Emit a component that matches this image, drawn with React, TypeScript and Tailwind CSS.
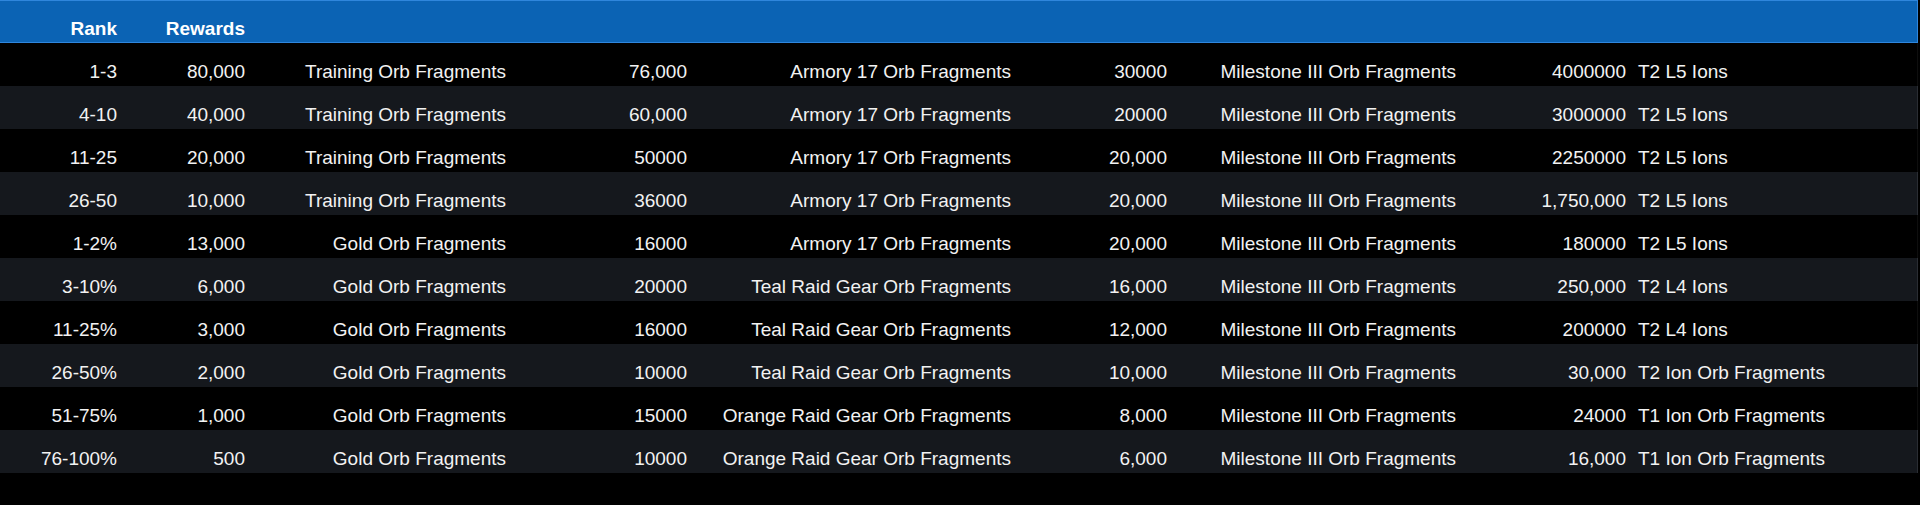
import React from "react";

const rows: string[][] = [
  ["1-3", "80,000", "Training Orb Fragments", "76,000", "Armory 17 Orb Fragments", "30000", "Milestone III Orb Fragments", "4000000", "T2 L5 Ions"],
  ["4-10", "40,000", "Training Orb Fragments", "60,000", "Armory 17 Orb Fragments", "20000", "Milestone III Orb Fragments", "3000000", "T2 L5 Ions"],
  ["11-25", "20,000", "Training Orb Fragments", "50000", "Armory 17 Orb Fragments", "20,000", "Milestone III Orb Fragments", "2250000", "T2 L5 Ions"],
  ["26-50", "10,000", "Training Orb Fragments", "36000", "Armory 17 Orb Fragments", "20,000", "Milestone III Orb Fragments", "1,750,000", "T2 L5 Ions"],
  ["1-2%", "13,000", "Gold Orb Fragments", "16000", "Armory 17 Orb Fragments", "20,000", "Milestone III Orb Fragments", "180000", "T2 L5 Ions"],
  ["3-10%", "6,000", "Gold Orb Fragments", "20000", "Teal Raid Gear Orb Fragments", "16,000", "Milestone III Orb Fragments", "250,000", "T2 L4 Ions"],
  ["11-25%", "3,000", "Gold Orb Fragments", "16000", "Teal Raid Gear Orb Fragments", "12,000", "Milestone III Orb Fragments", "200000", "T2 L4 Ions"],
  ["26-50%", "2,000", "Gold Orb Fragments", "10000", "Teal Raid Gear Orb Fragments", "10,000", "Milestone III Orb Fragments", "30,000", "T2 Ion Orb Fragments"],
  ["51-75%", "1,000", "Gold Orb Fragments", "15000", "Orange Raid Gear Orb Fragments", "8,000", "Milestone III Orb Fragments", "24000", "T1 Ion Orb Fragments"],
  ["76-100%", "500", "Gold Orb Fragments", "10000", "Orange Raid Gear Orb Fragments", "6,000", "Milestone III Orb Fragments", "16,000", "T1 Ion Orb Fragments"],
];

const gridCols =
  "grid grid-cols-[117px_128px_261px_181px_324px_156px_289px_170px_1fr]";

export default function App() {
  return (
    <div
      className="w-[1920px] h-[505px] bg-black text-[#f2f2f2] overflow-hidden"
      style={{ fontFamily: '"Liberation Sans", Arial, sans-serif' }}
    >
      <div className="w-[1918px]">
        <div
          className={`${gridCols} h-[43px] bg-[#0b63b4] border-t border-b border-r border-[#2f86dc] text-[19px] font-bold items-end pb-[2px] text-white`}
        >
          <div className="text-right leading-[22px]">Rank</div>
          <div className="text-right leading-[22px]">Rewards</div>
          <div />
          <div />
          <div />
          <div />
          <div />
          <div />
          <div />
        </div>
        {rows.map((r, i) => (
          <div
            key={i}
            className={`${gridCols} h-[43px] items-end pb-[3px] text-[19px] leading-[22px] border-r ${
              i % 2 === 1 ? "bg-[#15181d] border-[#2a2d33]" : "bg-black border-[#0e0e0e]"
            }`}
          >
            {r.map((c, j) => (
              <div
                key={j}
                className={`whitespace-nowrap ${j === 8 ? "text-left pl-[12px]" : "text-right"}`}
              >
                {c}
              </div>
            ))}
          </div>
        ))}
      </div>
    </div>
  );
}
